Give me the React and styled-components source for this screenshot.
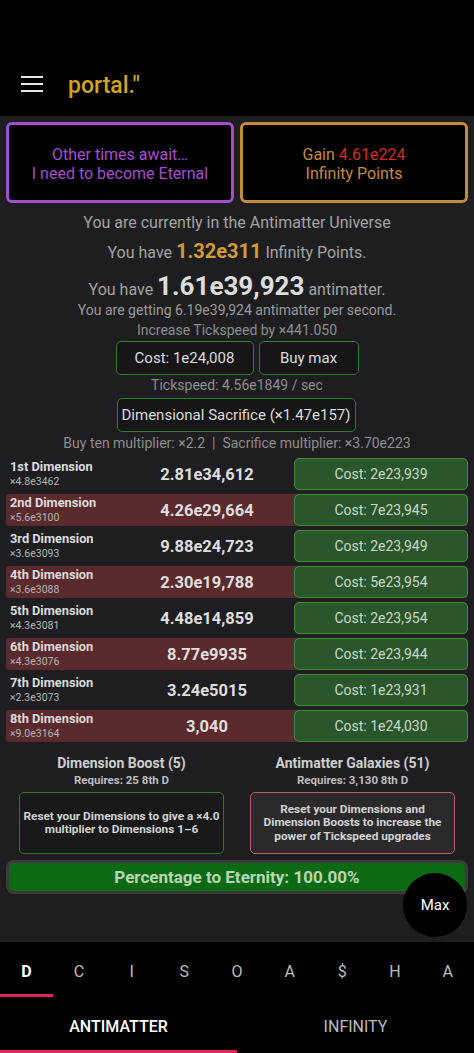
import React from "react";
import styled, { createGlobalStyle } from "styled-components";

const Global = createGlobalStyle`
  html, body { margin: 0; padding: 0; background: #000; }
  body { font-family: Roboto, "Noto Sans", "Liberation Sans", sans-serif; }
  * { box-sizing: border-box; }
`;

const Page = styled.div`
  width: 474px;
  height: 1053px;
  display: flex;
  flex-direction: column;
  background: #000;
  overflow: hidden;
`;

const Header = styled.header`
  height: 116px;
  padding: 52px 0 0 21px;
  flex: none;
`;

const HeaderRow = styled.div`
  height: 64px;
  display: flex;
  align-items: center;
  gap: 25px;
`;

const Burger = styled.div`
  width: 22px;
  display: flex;
  flex-direction: column;
  gap: 5px;
  span { display: block; height: 2px; background: #e6e6e6; }
`;

const Title = styled.div`
  color: #d2a51c;
  font-size: 23px;
  font-weight: 500;
  margin-top: 2px;
`;

const Main = styled.main`
  flex: none;
  height: 826px;
  background: #1e1e21;
  padding: 6px 6px 0 6px;
  position: relative;
  display: flex;
  flex-direction: column;
`;

const TopGrid = styled.div`
  display: grid;
  grid-template-columns: 1fr 1fr;
  gap: 6px;
`;

const BigBox = styled.div`
  height: 81px;
  background: #000;
  border: 3px solid ${(p) => p.$color};
  border-radius: 6px;
  color: ${(p) => p.$color};
  display: flex;
  flex-direction: column;
  justify-content: center;
  align-items: center;
  font-size: 16px;
  line-height: 19px;
  text-align: center;
  padding-top: 2px;
`;

const Red = styled.span`
  color: #d42a26;
`;

const Line = styled.div`
  text-align: center;
  color: ${(p) => p.$color || "#9d9d9d"};
  font-size: ${(p) => p.$size || 14}px;
  line-height: ${(p) => p.$lh}px;
  height: ${(p) => p.$lh}px;
  margin-top: ${(p) => p.$mt || 0}px;
  white-space: nowrap;
`;

const Strong = styled.span`
  font-weight: 700;
  font-size: ${(p) => p.$size}px;
  line-height: 1;
  color: ${(p) => p.$color};
`;

const ButtonRow = styled.div`
  display: flex;
  justify-content: center;
  gap: 5px;
  margin-top: ${(p) => p.$mt || 0}px;
`;

const OutlineButton = styled.div`
  width: ${(p) => p.$w}px;
  height: 34px;
  border: 1.5px solid #2e7a30;
  border-radius: 5px;
  background: #161617;
  color: #dcdcdc;
  font-size: 15px;
  display: flex;
  align-items: center;
  justify-content: center;
  margin-left: ${(p) => p.$ml || 0}px;
`;

const DimList = styled.div`
  display: flex;
  flex-direction: column;
  gap: 4px;
  margin-top: 6px;
`;

const DimRow = styled.div`
  height: 32px;
  display: grid;
  grid-template-columns: 114px 1fr 174px;
  align-items: center;
  border-radius: 4px;
  background: ${(p) => (p.$odd ? "#5a2a2c" : "transparent")};
`;

const DimName = styled.div`
  padding-left: 4px;
  display: flex;
  flex-direction: column;
  b {
    font-size: 12.8px;
    line-height: 16px;
    font-weight: 700;
    color: #dcdcdc;
  }
  small {
    font-size: 10.5px;
    line-height: 14px;
    color: #b4b4b4;
  }
`;

const DimAmount = styled.div`
  text-align: center;
  font-size: 16.5px;
  font-weight: 700;
  color: #dedede;
`;

const CostButton = styled.div`
  height: 32px;
  border: 1px solid #3e8e3e;
  border-radius: 5px;
  background: #2b552b;
  color: #c9d9c9;
  font-size: 14px;
  display: flex;
  align-items: center;
  justify-content: center;
`;

const ResetGrid = styled.div`
  display: grid;
  grid-template-columns: 1fr 1fr;
  margin-top: 12px;
`;

const ResetCol = styled.div`
  display: flex;
  flex-direction: column;
  align-items: center;
`;

const ResetTitle = styled.div`
  color: #cfcfcf;
  font-weight: 700;
  font-size: 14px;
  line-height: 18px;
`;

const ResetReq = styled.div`
  color: #bdbdbd;
  font-weight: 700;
  font-size: 11.5px;
  line-height: 16px;
`;

const ResetBox = styled.div`
  margin-top: 4px;
  width: 205px;
  height: 62px;
  border: 1px solid ${(p) => p.$border};
  background: ${(p) => p.$bg};
  border-radius: 5px;
  display: flex;
  flex-direction: column;
  align-items: center;
  justify-content: center;
  text-align: center;
  color: #d2d2d2;
  font-weight: 700;
  font-size: 11.8px;
  line-height: 13.5px;
  span { white-space: nowrap; }
`;

const ProgressOuter = styled.div`
  margin-top: 6px;
  height: 34px;
  border-radius: 8px;
  background: #3b3b3e;
  padding: 3px;
`;

const ProgressFill = styled.div`
  height: 100%;
  border-radius: 5px;
  background: #0c6a14;
  color: #b9d6b4;
  font-weight: 700;
  font-size: 17px;
  display: flex;
  align-items: center;
  justify-content: center;
`;

const MaxButton = styled.div`
  position: absolute;
  left: 403px;
  top: 757px;
  width: 64px;
  height: 64px;
  border-radius: 50%;
  background: #000;
  color: #fff;
  font-size: 15px;
  display: flex;
  align-items: center;
  justify-content: center;
`;

const TabBar = styled.div`
  flex: none;
  display: grid;
  grid-template-columns: repeat(${(p) => p.$n}, 1fr);
  height: ${(p) => p.$h}px;
`;

const Tab = styled.div`
  display: flex;
  align-items: center;
  justify-content: center;
  position: relative;
  color: ${(p) => (p.$active ? "#ffffff" : "#bdbdbd")};
  font-weight: ${(p) => (p.$active ? p.$weight || 700 : 400)};
  font-size: ${(p) => p.$size}px;
  padding-top: ${(p) => p.$pt || 0}px;
  &::after {
    content: "";
    display: ${(p) => (p.$active ? "block" : "none")};
    position: absolute;
    left: 0;
    right: 0;
    bottom: 0;
    height: 3px;
    background: #e0245c;
  }
`;

const dims = [
  ["1st", "×4.8e3462", "2.81e34,612", "2e23,939"],
  ["2nd", "×5.6e3100", "4.26e29,664", "7e23,945"],
  ["3rd", "×3.6e3093", "9.88e24,723", "2e23,949"],
  ["4th", "×3.6e3088", "2.30e19,788", "5e23,954"],
  ["5th", "×4.3e3081", "4.48e14,859", "2e23,954"],
  ["6th", "×4.3e3076", "8.77e9935", "2e23,944"],
  ["7th", "×2.3e3073", "3.24e5015", "1e23,931"],
  ["8th", "×9.0e3164", "3,040", "1e24,030"],
];

const letters = ["D", "C", "I", "S", "O", "A", "$", "H", "A"];

export default function App() {
  return (
    <Page>
      <Global />
      <Header>
        <HeaderRow>
          <Burger>
            <span />
            <span />
            <span />
          </Burger>
          <Title>portal."</Title>
        </HeaderRow>
      </Header>
      <Main>
        <TopGrid>
          <BigBox $color="#a24fcf">
            <div>Other times await…</div>
            <div>I need to become Eternal</div>
          </BigBox>
          <BigBox $color="#c48b3a">
            <div>
              Gain <Red>4.61e224</Red>
            </div>
            <div>Infinity Points</div>
          </BigBox>
        </TopGrid>
        <Line $size={16} $lh={20} $mt={10} $color="#a3a3a3">
          You are currently in the Antimatter Universe
        </Line>
        <Line $size={16} $lh={40} $color="#a3a3a3">
          You have <Strong $size={20} $color="#d49a35">1.32e311</Strong> Infinity Points.
        </Line>
        <Line $size={16} $lh={28} $color="#a3a3a3">
          You have <Strong $size={26} $color="#dddddd">1.61e39,923</Strong> antimatter.
        </Line>
        <Line $size={14} $lh={18} $color="#9a9a9a">
          You are getting 6.19e39,924 antimatter per second.
        </Line>
        <Line $size={14} $lh={18} $mt={2} $color="#8d8d8d">
          Increase Tickspeed by ×441.050
        </Line>
        <ButtonRow $mt={2}>
          <OutlineButton $w={138}>Cost: 1e24,008</OutlineButton>
          <OutlineButton $w={100}>Buy max</OutlineButton>
        </ButtonRow>
        <Line $size={14} $lh={18} $mt={1} $color="#8d8d8d">
          Tickspeed: 4.56e1849 / sec
        </Line>
        <ButtonRow $mt={4}>
          <OutlineButton $w={239} $ml={-2}>Dimensional Sacrifice (×1.47e157)</OutlineButton>
        </ButtonRow>
        <Line $size={14} $lh={18} $mt={2} $color="#8d8d8d">
          Buy ten multiplier: ×2.2 &nbsp;|&nbsp; Sacrifice multiplier: ×3.70e223
        </Line>
        <DimList>
          {dims.map(([n, mult, amt, cost], i) => (
            <DimRow key={n} $odd={i % 2 === 1}>
              <DimName>
                <b>{n} Dimension</b>
                <small>{mult}</small>
              </DimName>
              <DimAmount>{amt}</DimAmount>
              <CostButton>Cost: {cost}</CostButton>
            </DimRow>
          ))}
        </DimList>
        <ResetGrid>
          <ResetCol>
            <ResetTitle>Dimension Boost (5)</ResetTitle>
            <ResetReq>Requires: 25 8th D</ResetReq>
            <ResetBox $border="#2e7a30" $bg="#19191a">
              <span>Reset your Dimensions to give a ×4.0</span>
              <span>multiplier to Dimensions 1–6</span>
            </ResetBox>
          </ResetCol>
          <ResetCol>
            <ResetTitle>Antimatter Galaxies (51)</ResetTitle>
            <ResetReq>Requires: 3,130 8th D</ResetReq>
            <ResetBox $border="#c05a68" $bg="#2a2a2b">
              <span>Reset your Dimensions and</span>
              <span>Dimension Boosts to increase the</span>
              <span>power of Tickspeed upgrades</span>
            </ResetBox>
          </ResetCol>
        </ResetGrid>
        <ProgressOuter>
          <ProgressFill>Percentage to Eternity: 100.00%</ProgressFill>
        </ProgressOuter>
        <MaxButton>Max</MaxButton>
      </Main>
      <TabBar $n={9} $h={55}>
        {letters.map((l, i) => (
          <Tab key={i} $active={i === 0} $size={16} $pt={4}>
            {l}
          </Tab>
        ))}
      </TabBar>
      <TabBar $n={2} $h={56}>
        <Tab $active $weight={500} $size={16} $pt={2}>ANTIMATTER</Tab>
        <Tab $size={16} $pt={2}>INFINITY</Tab>
      </TabBar>
    </Page>
  );
}
